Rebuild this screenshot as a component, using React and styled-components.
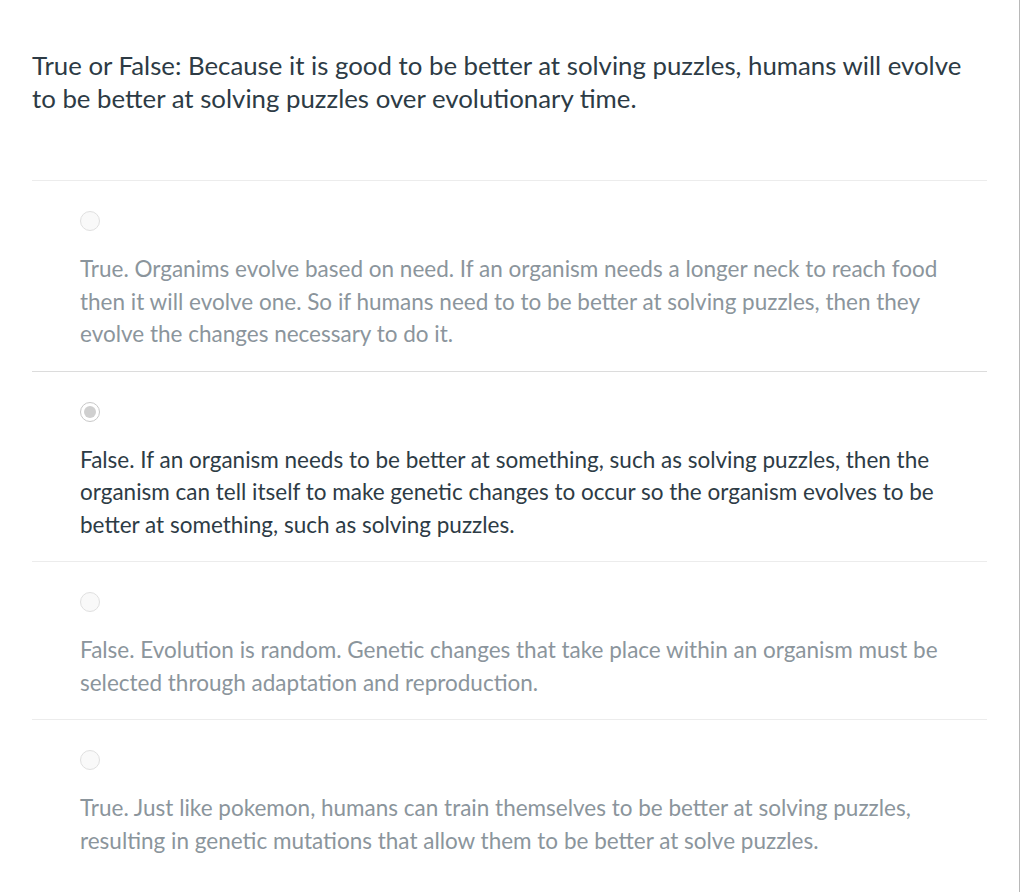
import styled, { createGlobalStyle } from "styled-components";

const GlobalStyle = createGlobalStyle`
  body {
    margin: 0;
    background: #fff;
    font-family: Lato, "Noto Sans", "Liberation Sans", sans-serif;
  }
`;

const Page = styled.div`
  width: 1020px;
  min-height: 892px;
  box-sizing: border-box;
  padding: 49px 32px 0 32px;
  border-right: 1px solid #b8b8b8;
`;

const Question = styled.div`
  font-size: 25.8px;
  line-height: 33px;
  color: #2d3b45;
  margin-bottom: 65px;
`;

const AnswerList = styled.div`
  display: flex;
  flex-direction: column;
`;

const Answer = styled.div`
  border-top: 1px solid ${({ $strong }) => ($strong ? "#dcdcdc" : "#ececec")};
  padding: 30px 44px 20px 48px;
  display: flex;
  flex-direction: column;
  gap: 22px;
`;

const Radio = styled.span`
  width: 20px;
  height: 20px;
  box-sizing: border-box;
  border-radius: 50%;
  border: 1px solid ${({ $checked }) => ($checked ? "#c8c8c8" : "#e0e0e0")};
  background: ${({ $checked }) => ($checked ? "#fff" : "#f9f9f9")};
  display: flex;
  align-items: center;
  justify-content: center;

  &::after {
    content: "";
    display: ${({ $checked }) => ($checked ? "block" : "none")};
    width: 12px;
    height: 12px;
    border-radius: 50%;
    background: #cfcfcf;
  }
`;

const AnswerText = styled.div`
  font-size: 22.5px;
  line-height: 32.5px;
  color: ${({ $checked }) => ($checked ? "#2d3b45" : "#8b959c")};
`;

const answers = [
  {
    text: "True. Organims evolve based on need. If an organism needs a longer neck to reach food then it will evolve one. So if humans need to to be better at solving puzzles, then they evolve the changes necessary to do it.",
  },
  {
    text: "False. If an organism needs to be better at something, such as solving puzzles, then the organism can tell itself to make genetic changes to occur so the organism evolves to be better at something, such as solving puzzles.",
    checked: true,
  },
  {
    text: "False. Evolution is random. Genetic changes that take place within an organism must be selected through adaptation and reproduction.",
  },
  {
    text: "True. Just like pokemon, humans can train themselves to be better at solving puzzles, resulting in genetic mutations that allow them to be better at solve puzzles.",
  },
];

export default function App() {
  return (
    <>
      <GlobalStyle />
      <Page>
        <Question>
          True or False: Because it is good to be better at solving puzzles, humans will evolve
          to be better at solving puzzles over evolutionary time.
        </Question>
        <AnswerList>
          {answers.map((a, i) => (
            <Answer key={i} $strong={i === 1}>
              <Radio $checked={a.checked} />
              <AnswerText $checked={a.checked}>{a.text}</AnswerText>
            </Answer>
          ))}
        </AnswerList>
      </Page>
    </>
  );
}
